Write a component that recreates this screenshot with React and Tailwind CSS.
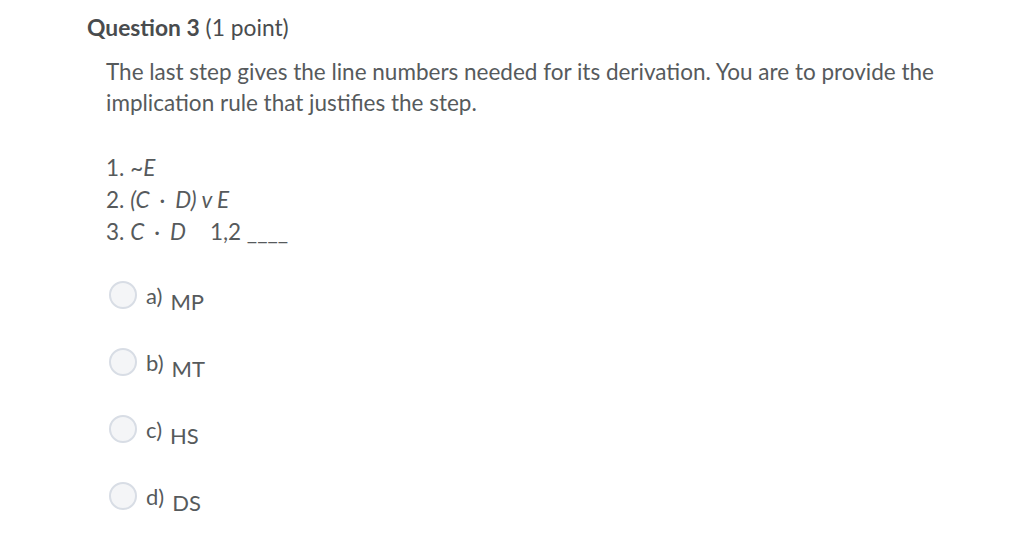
import React from 'react';

const OPTIONS = [
  { key: 'a)', label: 'MP' },
  { key: 'b)', label: 'MT' },
  { key: 'c)', label: 'HS' },
  { key: 'd)', label: 'DS' },
];

const Radio = () => (
  <span className="inline-block w-[28px] h-[28px] rounded-full border-2 border-[#d8dde5] bg-[#f4f5f7] shrink-0" />
);

// middle dot with wider gaps, as in the source
const Dot = () => <span className="mx-[10px]">·</span>;

export default function App() {
  return (
    <div className="w-[1024px] h-[540px] bg-white text-[#565a5c] font-['Lato',sans-serif] overflow-hidden">
      <div className="pl-[87px] pt-[13px]">
        <h2 className="text-[22.8px] leading-[28px] text-[#494c4e]">
          <span className="font-bold">Question 3</span> (1 point)
        </h2>
        <div className="pl-[19px] pt-[15px]">
          <p className="text-[22.5px] leading-[31px] w-[880px]">
            The last step gives the line numbers needed for its derivation. You are to provide the implication rule that justifies the step.
          </p>
          <div className="pt-[34px] text-[22.5px] leading-[32px]">
            <div>1. <i>~E</i></div>
            <div>2. <i>(C<Dot />D) v E</i></div>
            <div>3. <i>C<Dot />D</i><span className="pl-[24px]">1,2 ____</span></div>
          </div>
          <div className="pt-[33px] flex flex-col gap-[39px]">
            {OPTIONS.map((o) => (
              <div key={o.key} className="flex items-start pl-[3px] h-[28px] text-[22px] leading-[28px]">
                <Radio />
                <span className="ml-[9px] mt-[1px]">{o.key}</span>
                <span className="ml-[8px] mt-[7px]">{o.label}</span>
              </div>
            ))}
          </div>
        </div>
      </div>
    </div>
  );
}
